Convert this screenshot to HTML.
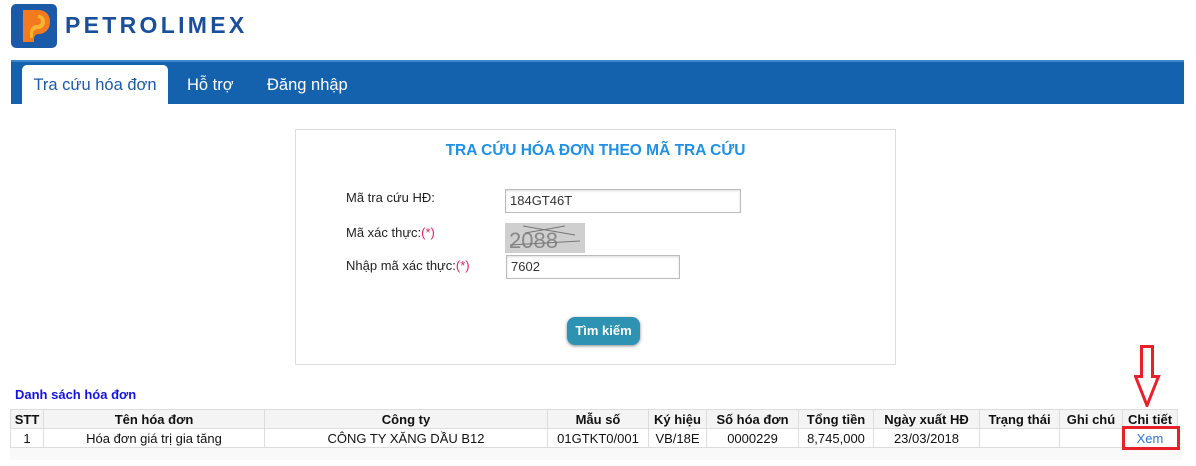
<!DOCTYPE html>
<html><head><meta charset="utf-8"><style>
body{margin:0;width:1196px;height:466px;background:#fff;font-family:"Liberation Sans",Arial,sans-serif;position:relative;overflow:hidden}
.a{position:absolute}
.nav{left:11px;top:60px;width:1173px;height:44px;background:#1461ae;border-top:2px solid #3a85cc;box-sizing:border-box}
.tab{position:absolute;top:3px;height:41px;font-size:16.5px;color:#fff;line-height:41px}
.act{background:#fff;color:#1a5aa8;border-radius:5px 5px 0 0;left:11px;width:146px;text-align:center}
.box{left:295px;top:129px;width:601px;height:236px;border:1px solid #ddd;box-sizing:border-box}
.lbl{font-size:13px;color:#222}
.inp{border:1px solid #bbb;box-sizing:border-box;font-size:13px;color:#333;padding-left:4px;line-height:21px;box-shadow:inset 0 1px 2px #ddd}
.r{color:#e0245e}
table{border-collapse:collapse;position:absolute;left:10px;top:409px;font-size:13px;table-layout:fixed}
td,th{border:1px solid #ddd;text-align:center;padding:0;height:18px;color:#111}
th{background:#f4f4f4;font-weight:bold}
</style></head><body>
<svg class="a" style="left:11px;top:4px" width="46" height="44" viewBox="0 0 46 44">
<rect width="46" height="44" rx="5" fill="#1a5aa8"/>
<path d="M9 6h18c8 0 12 5 12 12s-5 12-11 12c-3 0-5 2-5 5v3H12V6z" fill="#f47a20"/>
<path d="M27 11c5 0 7 3 7 7s-3 7-7 7c-3 0-5 2-5 5v4h-3v-5c0-5 3-8 7-8 2 0 4-1 4-3s-1-4-3-4z" fill="#f8b530"/>
</svg>
<div class="a" style="left:65px;top:12px;font-size:23px;font-weight:bold;color:#1a4f9c;letter-spacing:3.3px">PETROLIMEX</div>
<div class="a nav">
<div class="tab act">Tra cứu hóa đơn</div>
<div class="tab" style="left:176px">Hỗ trợ</div>
<div class="tab" style="left:256px">Đăng nhập</div>
</div>
<div class="a box"></div>
<div class="a" style="left:295px;width:601px;top:142px;text-align:center;font-size:15.5px;font-weight:bold;color:#1e90e6">TRA CỨU HÓA ĐƠN THEO MÃ TRA CỨU</div>
<div class="a lbl" style="left:346px;top:190px">Mã tra cứu HĐ:</div>
<div class="a inp" style="left:505px;top:189px;width:236px;height:24px">184GT46T</div>
<div class="a lbl" style="left:346px;top:225px">Mã xác thực:<span class="r">(*)</span></div>
<svg class="a" style="left:505px;top:223px" width="80" height="30"><rect width="80" height="30" fill="#cfcfcf"/><text x="4" y="25" font-size="22" fill="#888" font-family="Liberation Sans">2088</text><path d="M18 3L70 12M5 22L75 18M20 10L60 3" stroke="#777" fill="none"/></svg>
<div class="a lbl" style="left:346px;top:258px">Nhập mã xác thực:<span class="r">(*)</span></div>
<div class="a inp" style="left:506px;top:255px;width:174px;height:24px">7602</div>
<div class="a" style="left:567px;top:317px;width:73px;height:28px;background:#2e93b3;border-radius:8px;color:#fff;font-weight:bold;font-size:13px;text-align:center;line-height:27px;box-shadow:0 1px 3px #888">Tìm kiếm</div>
<div class="a" style="left:15px;top:387px;font-size:13px;font-weight:bold;color:#1414e0">Danh sách hóa đơn</div>
<div class="a" style="left:10px;top:447px;width:1172px;height:13px;background:#f9f9f9"></div>
<table>
<colgroup><col style="width:33px"><col style="width:221px"><col style="width:283px"><col style="width:101px"><col style="width:58px"><col style="width:92px"><col style="width:75px"><col style="width:106px"><col style="width:80px"><col style="width:63px"><col style="width:55px"></colgroup>
<tr><th>STT</th><th>Tên hóa đơn</th><th>Công ty</th><th>Mẫu số</th><th>Ký hiệu</th><th>Số hóa đơn</th><th>Tổng tiền</th><th>Ngày xuất HĐ</th><th>Trạng thái</th><th>Ghi chú</th><th>Chi tiết</th></tr>
<tr><td>1</td><td>Hóa đơn giá trị gia tăng</td><td>CÔNG TY XĂNG DẦU B12</td><td>01GTKT0/001</td><td>VB/18E</td><td>0000229</td><td>8,745,000</td><td>23/03/2018</td><td></td><td></td><td style="color:#2a7ad5">Xem</td></tr>
</table>
<div class="a" style="left:1122px;top:426px;width:58px;height:24px;border:3px solid #e8202a;box-sizing:border-box"></div>
<svg class="a" style="left:1134px;top:345px" width="28" height="62"><path d="M7.5 1.5h11v30h6l-11.5 29l-11.5-29h6z" fill="none" stroke="#e8202a" stroke-width="3"/></svg>
</body></html>
